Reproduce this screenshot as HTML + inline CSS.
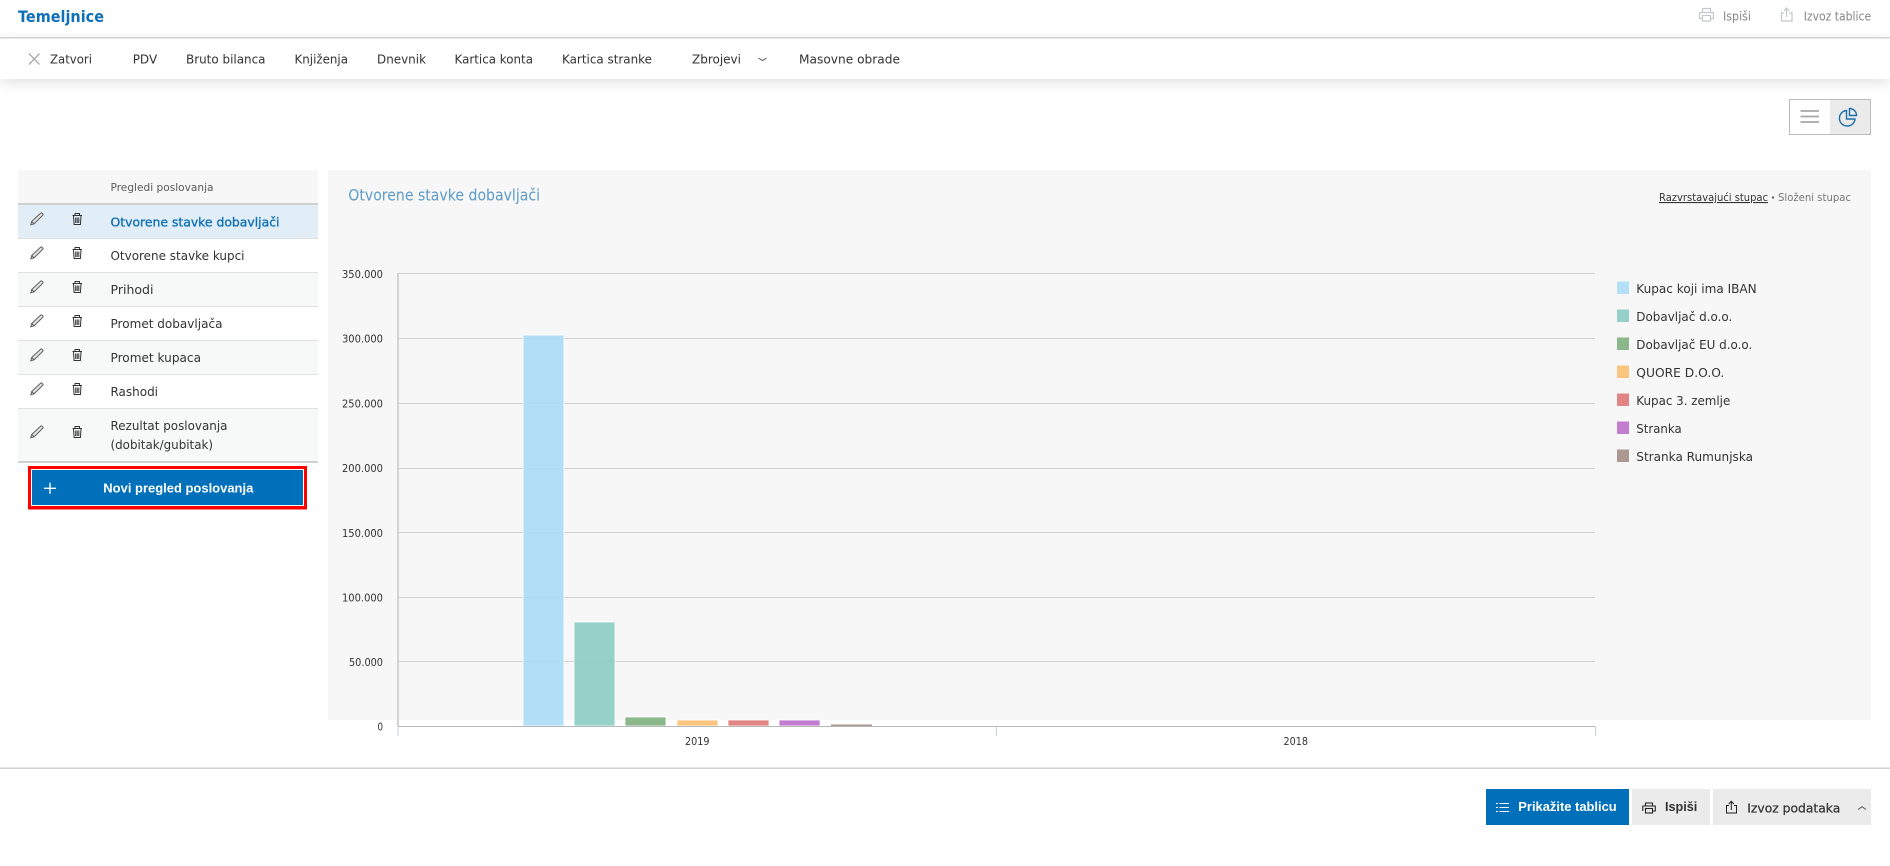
<!DOCTYPE html>
<html lang="hr">
<head>
<meta charset="utf-8">
<title>Temeljnice</title>
<style>
html,body{margin:0;padding:0;background:#fff;width:1890px;height:866px;overflow:hidden}
svg{display:block;position:absolute;left:0;top:0}
#bar{position:absolute;left:0;top:38px;width:1890px;height:41px;background:#fff;box-shadow:0 3px 14px rgba(0,0,0,.13)}
text{font-family:"DejaVu Sans","Liberation Sans",sans-serif;font-size:12px;fill:#333;white-space:pre}
.b{font-family:"Liberation Sans",sans-serif;font-weight:bold;font-size:13px}
.n{font-size:12.5px;fill:#333}
.t{font-size:12.5px;fill:#333}
.a{font-size:11px;fill:#333}
.l{font-size:12.5px;fill:#333}
</style>
</head>
<body>
<div id="bar"></div>
<svg width="1890" height="866" viewBox="0 0 1890 866" xmlns="http://www.w3.org/2000/svg">
<defs>
<g id="pen" fill="none" stroke="#5a5a5a" stroke-width="1">
<path d="M30.800 224.800l.9-3.300 8.900-8.300a1 1 0 0 1 1.400 0l.7.700a1 1 0 0 1 0 1.400L34.100 223.800z" fill="#e2e2e2"/>
<path d="M31.800 221.500l2.300 2.300"/>
</g>
<g id="tr" fill="none" stroke="#333" stroke-width="1">
<path d="M72.500 215.500h9.500M75 215v-1.500h4.500v1.500"/>
<path d="M73.500 216l.6 8.500h6.300l.6-8.500"/>
<path d="M75.700 217.500v5.500M77.200 217.500v5.500M78.800 217.500v5.500"/>
</g>
</defs>

<!-- Header -->
<text x="18" y="22" textLength="86" lengthAdjust="spacingAndGlyphs" style="font-weight:bold;font-size:16px;fill:#0f70b7">Temeljnice</text>
<rect x="0" y="37" width="1890" height="1.500" fill="#d2d2d2"/>

<g fill="none" stroke="#c4c8c8" stroke-width="1.200">
<path d="M1702.500 12.500v-4h8v4M1699.600 12.500h13.800v6h-3M1702.500 18.500h-2.900v-6"/>
<rect x="1702.500" y="15.500" width="8" height="5.500"/>
<path d="M1786.500 17v-8.500M1784 11l2.500-3 2.500 3M1784 13h-2.500v8h10.500v-8H1789"/>
</g>
<text x="1723" y="20.500" textLength="28" lengthAdjust="spacingAndGlyphs" style="font-size:12.500px;fill:#858585">Ispiši</text>
<text x="1803.700" y="20.500" textLength="67.500" lengthAdjust="spacingAndGlyphs" style="font-size:12.500px;fill:#858585">Izvoz tablice</text>

<!-- Toolbar -->
<path d="M29 53.500l10.500 11M39.500 53.500L29 64.500" stroke="#9a9a9a" stroke-width="1.100" fill="none"/>
<text class="n" x="50" y="63.500" textLength="42" lengthAdjust="spacingAndGlyphs">Zatvori</text>
<text class="n" x="132.700" y="63.500" textLength="24.500" lengthAdjust="spacingAndGlyphs">PDV</text>
<text class="n" x="186" y="63.500" textLength="79.500" lengthAdjust="spacingAndGlyphs">Bruto bilanca</text>
<text class="n" x="294.500" y="63.500" textLength="53.500" lengthAdjust="spacingAndGlyphs">Knjiženja</text>
<text class="n" x="377" y="63.500" textLength="49" lengthAdjust="spacingAndGlyphs">Dnevnik</text>
<text class="n" x="454.500" y="63.500" textLength="78.500" lengthAdjust="spacingAndGlyphs">Kartica konta</text>
<text class="n" x="562" y="63.500" textLength="90" lengthAdjust="spacingAndGlyphs">Kartica stranke</text>
<text class="n" x="692" y="63.500" textLength="49" lengthAdjust="spacingAndGlyphs">Zbrojevi</text>
<path d="M758.500 58l4 2.500 4-2.500" fill="none" stroke="#555" stroke-width="1"/>
<text class="n" x="799" y="63.500" textLength="101" lengthAdjust="spacingAndGlyphs">Masovne obrade</text>

<!-- View toggle -->
<rect x="1789.500" y="99.500" width="81" height="35" fill="#fff" stroke="#bbb"/>
<rect x="1830" y="100" width="40" height="34" fill="#ebebeb"/>
<path d="M1800.500 111h18.500M1800.500 116.500h18.500M1800.500 122h18.500" stroke="#a8a8a8" stroke-width="1.800" fill="none"/>
<g fill="none" stroke="#1a6ea8" stroke-width="1.400">
<path d="M1846.500 110.500a7.800 7.800 0 1 0 8.500 8.500h-8.500z"/>
<path d="M1849.500 108.500a7 7 0 0 1 7 7h-7z"/>
</g>

<!-- Left table -->
<rect x="18" y="170" width="300" height="33.500" fill="#f7f7f7"/>
<rect x="18" y="203" width="300" height="2" fill="#cfcfcf"/>
<rect x="18" y="205" width="300" height="33.500" fill="#e2eef7"/>
<rect x="18" y="239.500" width="300" height="33" fill="#fff"/>
<rect x="18" y="273" width="300" height="33.500" fill="#f7f8f8"/>
<rect x="18" y="307" width="300" height="33" fill="#fff"/>
<rect x="18" y="341" width="300" height="33" fill="#f7f8f8"/>
<rect x="18" y="375" width="300" height="33" fill="#fff"/>
<rect x="18" y="409" width="300" height="52" fill="#f7f8f8"/>
<g fill="#e0e0e0">
<rect x="18" y="238" width="300" height="1"/>
<rect x="18" y="272" width="300" height="1"/>
<rect x="18" y="306" width="300" height="1"/>
<rect x="18" y="340" width="300" height="1"/>
<rect x="18" y="374" width="300" height="1"/>
<rect x="18" y="408" width="300" height="1"/>
</g>
<rect x="18" y="461" width="300" height="2" fill="#cfcfcf"/>

<text x="110.500" y="191" textLength="103" lengthAdjust="spacingAndGlyphs" style="font-size:11px;fill:#5a5a5a">Pregledi poslovanja</text>
<text class="t" x="110.500" y="226.500" textLength="169" lengthAdjust="spacingAndGlyphs" style="fill:#0f70b7;stroke:#0f70b7;stroke-width:.35px">Otvorene stavke dobavljači</text>
<text class="t" x="110.500" y="260" textLength="134" lengthAdjust="spacingAndGlyphs">Otvorene stavke kupci</text>
<text class="t" x="110.500" y="294" textLength="43" lengthAdjust="spacingAndGlyphs">Prihodi</text>
<text class="t" x="110.500" y="328" textLength="112" lengthAdjust="spacingAndGlyphs">Promet dobavljača</text>
<text class="t" x="110.500" y="362" textLength="90.500" lengthAdjust="spacingAndGlyphs">Promet kupaca</text>
<text class="t" x="110.500" y="396" textLength="47.500" lengthAdjust="spacingAndGlyphs">Rashodi</text>
<text class="t" x="110.500" y="430" textLength="117" lengthAdjust="spacingAndGlyphs">Rezultat poslovanja</text>
<text class="t" x="110.500" y="449" textLength="102.500" lengthAdjust="spacingAndGlyphs">(dobitak/gubitak)</text>

<use href="#pen"/><use href="#pen" y="34"/><use href="#pen" y="68"/><use href="#pen" y="102"/><use href="#pen" y="136"/><use href="#pen" y="170"/><use href="#pen" y="213"/>
<use href="#tr"/><use href="#tr" y="34"/><use href="#tr" y="68"/><use href="#tr" y="102"/><use href="#tr" y="136"/><use href="#tr" y="170"/><use href="#tr" y="213"/>

<!-- Add button -->
<rect x="28" y="466" width="279" height="43.500" fill="#f00"/>
<rect x="31" y="469" width="273" height="37" fill="#fff"/>
<rect x="32" y="470" width="271" height="35" fill="#0070bb"/>
<path d="M44 488.300h12M50 482.800v11" stroke="#fff" stroke-width="1.400" fill="none"/>
<text class="b" x="103.300" y="492.500" textLength="150" lengthAdjust="spacingAndGlyphs" style="fill:#fff">Novi pregled poslovanja</text>

<!-- Chart panel -->
<rect x="328" y="170" width="1543" height="550" fill="#f7f7f7"/>
<text x="348.300" y="200.500" textLength="191.700" lengthAdjust="spacingAndGlyphs" style="font-size:16px;fill:#5b9ac9">Otvorene stavke dobavljači</text>
<text x="1659" y="201" textLength="109" lengthAdjust="spacingAndGlyphs" style="font-size:11px;fill:#333;text-decoration:underline">Razvrstavajući stupac</text>
<circle cx="1773" cy="197.500" r="1.200" fill="#666"/>
<text x="1778" y="201" textLength="73" lengthAdjust="spacingAndGlyphs" style="font-size:11px;fill:#777">Složeni stupac</text>

<!-- Grid -->
<g fill="#d2d2d2">
<rect x="398" y="273" width="1197" height="1"/>
<rect x="398" y="338" width="1197" height="1"/>
<rect x="398" y="403" width="1197" height="1"/>
<rect x="398" y="468" width="1197" height="1"/>
<rect x="398" y="532" width="1197" height="1"/>
<rect x="398" y="597" width="1197" height="1"/>
<rect x="398" y="661" width="1197" height="1"/>
<rect x="397" y="273" width="2" height="453"/>
</g>

<!-- Bars -->
<g stroke="#fff" stroke-width="1" stroke-opacity=".8">
<rect x="523" y="335" width="41" height="391" fill="#a9dcf6" fill-opacity=".88"/>
<rect x="574" y="622" width="41" height="104" fill="#89ccc3" fill-opacity=".88"/>
<rect x="625" y="717" width="41" height="9" fill="#8ab88a"/>
<rect x="677" y="720" width="41" height="6" fill="#fbc580"/>
<rect x="728" y="720" width="41" height="6" fill="#e28484"/>
<rect x="779" y="720" width="41" height="6" fill="#c27dd1"/>
</g>
<rect x="831" y="724.500" width="41" height="1.500" fill="#ab9890"/>

<!-- X axis -->
<rect x="398" y="726" width="1197" height="1" fill="#b8b8b8"/>
<g fill="#c3d0e0">
<rect x="397.500" y="727" width="1" height="9"/>
<rect x="996" y="727" width="1" height="9"/>
<rect x="1595" y="726" width="1" height="10"/>
</g>

<!-- Y labels -->
<g>
<text class="a" x="342" y="278" textLength="41" lengthAdjust="spacingAndGlyphs">350.000</text>
<text class="a" x="342" y="342.700" textLength="41" lengthAdjust="spacingAndGlyphs">300.000</text>
<text class="a" x="342" y="407.400" textLength="41" lengthAdjust="spacingAndGlyphs">250.000</text>
<text class="a" x="342" y="472.100" textLength="41" lengthAdjust="spacingAndGlyphs">200.000</text>
<text class="a" x="342" y="536.800" textLength="41" lengthAdjust="spacingAndGlyphs">150.000</text>
<text class="a" x="342" y="601.500" textLength="41" lengthAdjust="spacingAndGlyphs">100.000</text>
<text class="a" x="349" y="666" textLength="34" lengthAdjust="spacingAndGlyphs">50.000</text>
<text class="a" x="377.500" y="730.500" textLength="5.500" lengthAdjust="spacingAndGlyphs">0</text>
</g>
<text class="a" x="685" y="745" textLength="24.500" lengthAdjust="spacingAndGlyphs">2019</text>
<text class="a" x="1283.500" y="745" textLength="24.500" lengthAdjust="spacingAndGlyphs">2018</text>

<!-- Legend -->
<rect x="1617" y="281.500" width="12" height="12.500" fill="#b3e0f7"/>
<rect x="1617" y="309.500" width="12" height="12.500" fill="#95d1c9"/>
<rect x="1617" y="337.500" width="12" height="12.500" fill="#8ab88a"/>
<rect x="1617" y="365.500" width="12" height="12.500" fill="#fbc580"/>
<rect x="1617" y="393.500" width="12" height="12.500" fill="#e28484"/>
<rect x="1617" y="421.500" width="12" height="12.500" fill="#c27dd1"/>
<rect x="1617" y="449.500" width="12" height="12.500" fill="#ab9890"/>
<text class="l" x="1636.300" y="293" textLength="120.400" lengthAdjust="spacingAndGlyphs">Kupac koji ima IBAN</text>
<text class="l" x="1636.300" y="321" textLength="96" lengthAdjust="spacingAndGlyphs">Dobavljač d.o.o.</text>
<text class="l" x="1636.300" y="349" textLength="116" lengthAdjust="spacingAndGlyphs">Dobavljač EU d.o.o.</text>
<text class="l" x="1636.300" y="377" textLength="88" lengthAdjust="spacingAndGlyphs">QUORE D.O.O.</text>
<text class="l" x="1636.300" y="405" textLength="94" lengthAdjust="spacingAndGlyphs">Kupac 3. zemlje</text>
<text class="l" x="1636.300" y="433" textLength="45.400" lengthAdjust="spacingAndGlyphs">Stranka</text>
<text class="l" x="1636.300" y="461" textLength="116.700" lengthAdjust="spacingAndGlyphs">Stranka Rumunjska</text>

<!-- Bottom -->
<rect x="0" y="767.500" width="1890" height="1.500" fill="#d2d2d2"/>
<rect x="1486" y="789" width="143" height="36" fill="#0070bb"/>
<rect x="1632" y="789" width="78" height="36" fill="#ebebeb"/>
<rect x="1713" y="789" width="158" height="36" fill="#ebebeb"/>

<path d="M1499.500 803.500h9.500M1499.500 807.500h9.500M1499.500 811.500h9.500M1496 803.500h2M1496 807.500h2M1496 811.500h2" stroke="#fff" stroke-width="1" fill="none"/>
<text class="b" x="1518.300" y="811" textLength="98.400" lengthAdjust="spacingAndGlyphs" style="fill:#fff">Prikažite tablicu</text>

<g fill="none" stroke="#222" stroke-width="1.100">
<path d="M1645.500 806v-3h7v3M1642.800 811v-5h12.500v5h-2.800"/>
<rect x="1645.500" y="808.500" width="7" height="4.500"/>
</g>
<text class="b" x="1665" y="811" textLength="32.300" lengthAdjust="spacingAndGlyphs" style="fill:#333">Ispiši</text>

<g fill="none" stroke="#222" stroke-width="1">
<path d="M1731.300 810v-8.500M1728.800 804l2.500-2.800 2.500 2.800M1729 805.500h-2.500v7.500h10v-7.500h-2.500"/>
</g>
<text x="1747.300" y="812.500" textLength="93" lengthAdjust="spacingAndGlyphs" style="font-size:12.500px;fill:#3a3a3a;stroke:#3a3a3a;stroke-width:.3px">Izvoz podataka</text>
<path d="M1858 809.500l4-2.800 4 2.800" fill="none" stroke="#555" stroke-width="1"/>
</svg>
</body>
</html>
